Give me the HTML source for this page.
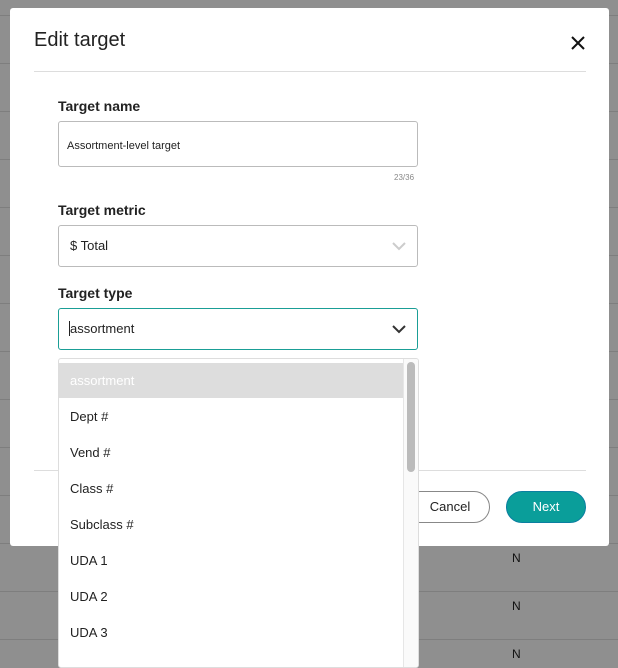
<!DOCTYPE html>
<html><head><style>
*{box-sizing:border-box;margin:0;padding:0}
body{width:618px;height:663px;overflow:hidden;background:#8f8f8f;position:relative;font-family:"Liberation Sans",sans-serif;color:#222}
.ln{position:absolute;left:0;width:618px;height:1px;background:#7e7e7e}
.n{position:absolute;left:512px;font-size:12px;color:#111}
.dlg{position:absolute;left:10px;top:8px;width:599px;height:538px;background:#fff;border-radius:3px}
.a{position:absolute}
.lbl{font-size:14px;font-weight:bold;color:#222}
.box{border:1px solid #bbb;border-radius:3px;background:#fff}
</style></head><body>
<div class="ln" style="top:15px"></div><div class="ln" style="top:63px"></div><div class="ln" style="top:111px"></div><div class="ln" style="top:159px"></div><div class="ln" style="top:207px"></div><div class="ln" style="top:255px"></div><div class="ln" style="top:303px"></div><div class="ln" style="top:351px"></div><div class="ln" style="top:399px"></div><div class="ln" style="top:447px"></div><div class="ln" style="top:495px"></div><div class="ln" style="top:543px"></div><div class="ln" style="top:591px"></div><div class="ln" style="top:639px"></div>
<div class="n" style="top:551px">N</div><div class="n" style="top:599px">N</div><div class="n" style="top:647px">N</div>
<div class="dlg"></div>
<div class="a" style="left:34px;top:29px;font-size:20px;color:#222">Edit target</div>
<svg class="a" style="left:571px;top:36px" width="14" height="14"><path d="M1 1L13 13M13 1L1 13" stroke="#111" stroke-width="2"/></svg>
<div class="a" style="left:34px;top:71px;width:552px;height:1px;background:#ddd"></div>
<div class="a lbl" style="left:58px;top:98px">Target name</div>
<div class="a box" style="left:58px;top:121px;width:360px;height:46px"></div>
<div class="a" style="left:67px;top:140px;font-size:11px">Assortment-level target</div>
<div class="a" style="left:394px;top:173px;font-size:8px;color:#888">23/36</div>
<div class="a lbl" style="left:58px;top:202px">Target metric</div>
<div class="a box" style="left:58px;top:225px;width:360px;height:42px"></div>
<div class="a" style="left:70px;top:238px;font-size:13px">$ Total</div>
<svg class="a" style="left:392px;top:242px" width="14" height="9"><path d="M1 1L7 7L13 1" stroke="#ccc" stroke-width="2" fill="none"/></svg>
<div class="a lbl" style="left:58px;top:285px">Target type</div>
<div class="a box" style="left:58px;top:308px;width:360px;height:42px;border-color:#1a9e96"></div>
<div class="a" style="left:69px;top:321px;font-size:13px;border-left:1px solid #222;padding-left:0">assortment</div>
<svg class="a" style="left:392px;top:325px" width="14" height="9"><path d="M1 1L7 7L13 1" stroke="#333" stroke-width="2" fill="none"/></svg>
<div class="a" style="left:34px;top:470px;width:552px;height:1px;background:#ddd"></div>
<div class="a" style="left:404px;top:491px;width:86px;height:32px;border:1px solid #888;border-radius:16px;font-size:13px;line-height:30px;text-align:center;padding-left:6px">Cancel</div>
<div class="a" style="left:506px;top:491px;width:80px;height:32px;background:#0a9e9a;border:1px solid #0b7fa0;border-radius:16px;font-size:13px;line-height:30px;text-align:center;color:#fff">Next</div>
<div class="a" style="left:58px;top:358px;width:361px;height:310px;background:#fff;border:1px solid #ddd;border-radius:3px;overflow:hidden">
<div style="position:absolute;left:0;top:4px;width:345px;height:35px;background:#ddd"></div>
<div style="position:absolute;right:0;top:0;width:15px;height:310px;background:#fafafa;border-left:1px solid #e6e6e6"></div>
<div style="position:absolute;right:3px;top:3px;width:8px;height:110px;background:#bbb;border-radius:4px"></div>
<div style="position:absolute;left:11px;top:14px;font-size:13px;line-height:16px">
<div style="color:#fff;height:36px">assortment</div><div style="height:36px">Dept #</div><div style="height:36px">Vend #</div><div style="height:36px">Class #</div><div style="height:36px">Subclass #</div><div style="height:36px">UDA 1</div><div style="height:36px">UDA 2</div><div style="height:36px">UDA 3</div></div>
</div>
</body></html>
